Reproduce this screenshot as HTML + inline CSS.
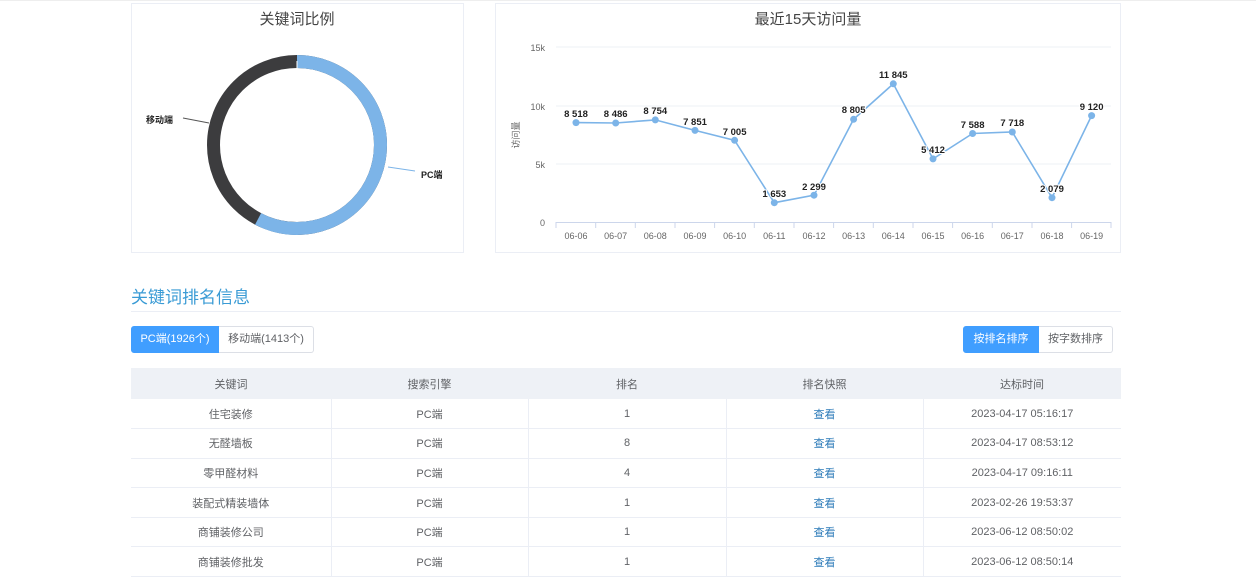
<!DOCTYPE html>
<html><head><meta charset="utf-8"><style>
*{margin:0;padding:0;box-sizing:border-box}
body{width:1256px;height:576px;overflow:hidden;background:#fff;font-family:"Liberation Sans","Noto Sans CJK SC",sans-serif;position:relative;color:#606266}
.abs{position:absolute}
.card{position:absolute;border:1px solid #ebeef5;background:#fff}
.btn{position:absolute;height:27px;font-size:11px;line-height:25px;text-align:center;border:1px solid #dcdfe6}
table{position:absolute;left:131px;top:368px;width:990px;border-collapse:collapse;font-size:11px}
th{background:#eef1f6;height:31px;font-weight:normal;color:#606266}
td{height:29.6px;text-align:center;border-bottom:1px solid #ebeef5;border-right:1px solid #ebeef5;color:#606266}
td:last-child{border-right:none}
td a{color:#2b7ab8;text-decoration:none}
</style></head><body>
<div class="abs" style="left:0;top:0;width:1256px;height:1px;background:#eee"></div>
<div class="card" style="left:131px;top:3px;width:333px;height:250px"></div>
<div class="card" style="left:495px;top:3px;width:626px;height:250px"></div>
<svg class="abs" style="left:0;top:0" width="1256" height="260" font-family="Liberation Sans,Noto Sans CJK SC,sans-serif">
<text x="297" y="24" text-anchor="middle" font-size="15" fill="#444">关键词比例</text>
<circle cx="297" cy="145" r="83.5" fill="none" stroke="#3c3c3e" stroke-width="13"/>
<circle cx="297" cy="145" r="83.5" fill="none" stroke="#7cb4e8" stroke-width="13" stroke-dasharray="302.7 600" transform="rotate(-90 297 145)"/>
<line x1="297" y1="61" x2="297" y2="74" stroke="#fff" stroke-width="1"/>
<path d="M183 118 L209 123" stroke="#555" fill="none"/>
<text x="146" y="123" font-size="9" font-weight="bold" fill="#222">移动端</text>
<path d="M388 167 L415 171" stroke="#7cb4e8" fill="none"/>
<text x="421" y="178" font-size="9" font-weight="bold" fill="#222">PC端</text>
<text x="808" y="24" text-anchor="middle" font-size="15" fill="#444">最近15天访问量</text>
<g stroke="#eef0f4"><line x1="556" y1="47" x2="1111" y2="47"/><line x1="556" y1="106" x2="1111" y2="106"/><line x1="556" y1="164" x2="1111" y2="164"/></g>
<line x1="556" y1="222.5" x2="1111" y2="222.5" stroke="#ccd6eb"/>
<g stroke="#ccd6eb"><line x1="556" y1="222" x2="556" y2="228"/><line x1="595.7" y1="222" x2="595.7" y2="228"/><line x1="635.3" y1="222" x2="635.3" y2="228"/><line x1="675" y1="222" x2="675" y2="228"/><line x1="714.6" y1="222" x2="714.6" y2="228"/><line x1="754.3" y1="222" x2="754.3" y2="228"/><line x1="794" y1="222" x2="794" y2="228"/><line x1="833.6" y1="222" x2="833.6" y2="228"/><line x1="873.3" y1="222" x2="873.3" y2="228"/><line x1="913" y1="222" x2="913" y2="228"/><line x1="952.6" y1="222" x2="952.6" y2="228"/><line x1="992.3" y1="222" x2="992.3" y2="228"/><line x1="1032" y1="222" x2="1032" y2="228"/><line x1="1071.6" y1="222" x2="1071.6" y2="228"/><line x1="1111" y1="222" x2="1111" y2="228"/></g>
<g font-size="9" fill="#666" text-anchor="end"><text x="545" y="51">15k</text><text x="545" y="110">10k</text><text x="545" y="168">5k</text><text x="545" y="226">0</text></g>
<text transform="translate(519 135) rotate(-90)" text-anchor="middle" font-size="9" fill="#666">访问量</text>
<g font-size="9" fill="#666" text-anchor="middle">
<text x="576" y="239">06-06</text><text x="615.7" y="239">06-07</text><text x="655.3" y="239">06-08</text><text x="695" y="239">06-09</text><text x="734.6" y="239">06-10</text><text x="774.3" y="239">06-11</text><text x="814" y="239">06-12</text><text x="853.6" y="239">06-13</text><text x="893.3" y="239">06-14</text><text x="933" y="239">06-15</text><text x="972.6" y="239">06-16</text><text x="1012.3" y="239">06-17</text><text x="1052" y="239">06-18</text><text x="1091.6" y="239">06-19</text></g>
<polyline fill="none" stroke="#7cb4e8" stroke-width="1.6" points="576,122.6 615.7,123 655.3,119.9 695,130.4 734.6,140.3 774.3,202.7 814,195.2 853.6,119.3 893.3,83.8 933,158.9 972.6,133.5 1012.3,132 1052,197.7 1091.6,115.6"/>
<g fill="#7cb4e8"><circle cx="576" cy="122.6" r="3.5"/><circle cx="615.7" cy="123" r="3.5"/><circle cx="655.3" cy="119.9" r="3.5"/><circle cx="695" cy="130.4" r="3.5"/><circle cx="734.6" cy="140.3" r="3.5"/><circle cx="774.3" cy="202.7" r="3.5"/><circle cx="814" cy="195.2" r="3.5"/><circle cx="853.6" cy="119.3" r="3.5"/><circle cx="893.3" cy="83.8" r="3.5"/><circle cx="933" cy="158.9" r="3.5"/><circle cx="972.6" cy="133.5" r="3.5"/><circle cx="1012.3" cy="132" r="3.5"/><circle cx="1052" cy="197.7" r="3.5"/><circle cx="1091.6" cy="115.6" r="3.5"/></g>
<g font-size="9.5" font-weight="bold" fill="#222" text-anchor="middle" stroke="#fff" stroke-width="2" paint-order="stroke">
<text x="576" y="117">8 518</text><text x="615.7" y="117">8 486</text><text x="655.3" y="114">8 754</text><text x="695" y="125">7 851</text><text x="734.6" y="135">7 005</text><text x="774.3" y="197">1 653</text><text x="814" y="190">2 299</text><text x="853.6" y="113">8 805</text><text x="893.3" y="78">11 845</text><text x="933" y="153">5 412</text><text x="972.6" y="128">7 588</text><text x="1012.3" y="126">7 718</text><text x="1052" y="192">2 079</text><text x="1091.6" y="110">9 120</text></g>
</svg>
<div class="abs" style="left:131px;top:283px;font-size:17px;color:#3a9bd5">关键词排名信息</div>
<div class="abs" style="left:131px;top:311px;width:990px;height:1px;background:#ebeef5"></div>
<div class="btn" style="left:131px;top:326px;width:88px;background:#409eff;border-color:#409eff;color:#fff;border-radius:3px 0 0 3px">PC端(1926个)</div>
<div class="btn" style="left:219px;top:326px;width:95px;background:#fff;color:#606266;border-left:none;border-radius:0 3px 3px 0">移动端(1413个)</div>
<div class="btn" style="left:963px;top:326px;width:76px;background:#409eff;border-color:#409eff;color:#fff;border-radius:3px 0 0 3px">按排名排序</div>
<div class="btn" style="left:1039px;top:326px;width:74px;background:#fff;color:#606266;border-left:none;border-radius:0 3px 3px 0">按字数排序</div>
<table>
<tr><th style="width:200px">关键词</th><th style="width:197px">搜索引擎</th><th style="width:198px">排名</th><th style="width:197px">排名快照</th><th>达标时间</th></tr>
<tr><td>住宅装修</td><td>PC端</td><td>1</td><td><a>查看</a></td><td>2023-04-17 05:16:17</td></tr>
<tr><td>无醛墙板</td><td>PC端</td><td>8</td><td><a>查看</a></td><td>2023-04-17 08:53:12</td></tr>
<tr><td>零甲醛材料</td><td>PC端</td><td>4</td><td><a>查看</a></td><td>2023-04-17 09:16:11</td></tr>
<tr><td>装配式精装墙体</td><td>PC端</td><td>1</td><td><a>查看</a></td><td>2023-02-26 19:53:37</td></tr>
<tr><td>商铺装修公司</td><td>PC端</td><td>1</td><td><a>查看</a></td><td>2023-06-12 08:50:02</td></tr>
<tr><td>商铺装修批发</td><td>PC端</td><td>1</td><td><a>查看</a></td><td>2023-06-12 08:50:14</td></tr>
</table>
</body></html>
